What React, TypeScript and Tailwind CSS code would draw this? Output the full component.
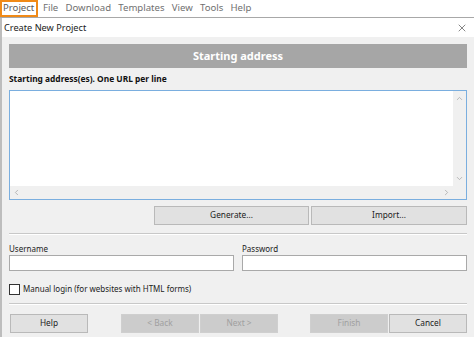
import { X, ChevronUp, ChevronDown, ChevronLeft, ChevronRight } from 'lucide-react';

const font = { fontFamily: '"Noto Sans", "Open Sans", sans-serif' };

function Btn({ label, disabled, className = '' }: { label: string; disabled?: boolean; className?: string }) {
  return (
    <div
      className={`h-[19px] flex items-center justify-center border text-[8.3px] ${
        disabled ? 'border-[#cfcfcf] bg-[#cccccc] text-[#a0a0a0]' : 'border-[#b9b9b9] bg-[#e1e1e1] text-[#222]'
      } ${className}`}
    >
      {label}
    </div>
  );
}

export default function App() {
  const menu = ['Project', 'File', 'Download', 'Templates', 'View', 'Tools', 'Help'];

  return (
    <div className="w-[474px] h-[337px] bg-[#f0f0f0] overflow-hidden flex flex-col" style={font}>
      {/* menu bar */}
      <div className="h-[18px] bg-white flex items-center text-[9.6px] text-[#707070] border-b border-[#a8a8a8] shadow-[0_1px_1px_rgba(0,0,0,0.15)]">
        {menu.map((m, i) => (
          <div
            key={m}
            className={
              i === 0
                ? 'h-[17px] pl-[1px] pr-[2px] mr-[1px] border-2 border-[#f08a17] flex items-center text-[#5a5a5a]'
                : 'px-[3.6px] flex items-center'
            }
          >
            {m}
          </div>
        ))}
      </div>

      <div className="flex-1 flex flex-col border-l-2 border-[#bdbdbd]">
        {/* title */}
        <div className="h-[19px] bg-white flex items-center justify-between pl-[2px] pr-[6px] text-[9.2px] text-[#222]">
          <span>Create New Project</span>
          <X className="w-[12px] h-[12px] text-[#444]" strokeWidth={1.3} />
        </div>

        <div className="flex-1 flex flex-col px-[7px] pt-[7px]">
          <div className="h-[24px] bg-[#a6a6a6] flex items-center justify-center text-white font-bold text-[11px]">
            Starting address
          </div>

          <div className="mt-[5px] text-[8.4px] font-bold text-[#111] leading-[12px]">
            Starting address(es). One URL per line
          </div>

          <div className="mt-[5px] h-[110px] border border-[#7aaedf] bg-white flex flex-col">
            <div className="flex-1 flex">
              <div className="flex-1" />
              <div className="w-[13px] bg-[#f0f0f0] flex flex-col items-center justify-between py-[3px]">
                <ChevronUp className="w-[9px] h-[9px] text-[#a6a6a6]" />
                <ChevronDown className="w-[9px] h-[9px] text-[#a6a6a6]" />
              </div>
            </div>
            <div className="h-[13px] flex">
              <div className="flex-1 bg-[#f0f0f0] flex items-center justify-between px-[2px]">
                <ChevronLeft className="w-[9px] h-[9px] text-[#a6a6a6]" />
                <ChevronRight className="w-[9px] h-[9px] text-[#a6a6a6]" />
              </div>
              <div className="w-[13px] bg-[#f0f0f0]" />
            </div>
          </div>

          <div className="mt-[6px] flex justify-end gap-[2px]">
            <Btn label="Generate..." className="w-[155px]" />
            <Btn label="Import..." className="w-[156px]" />
          </div>

          <div className="mt-[8px] border-t border-[#c8c8c8] border-b border-b-white" />

          <div className="mt-[8px] flex gap-[8px] text-[8px] text-[#222]">
            <div className="flex-1 flex flex-col">
              <span className="leading-[11px]">Username</span>
              <div className="mt-[1px] h-[16px] bg-white border border-[#a9a9a9]" />
            </div>
            <div className="flex-1 flex flex-col">
              <span className="leading-[11px]">Password</span>
              <div className="mt-[1px] h-[16px] bg-white border border-[#a9a9a9]" />
            </div>
          </div>

          <div className="mt-[12px] h-[12px] flex items-center gap-[3px] text-[8px] text-[#222]">
            <div className="w-[11px] h-[11px] bg-white border border-[#333]" />
            <span>Manual login (for websites with HTML forms)</span>
          </div>

          <div className="mt-[8px] border-t border-[#c8c8c8] border-b border-b-white" />

          <div className="mt-[9px] flex items-center">
            <Btn label="Help" className="w-[78px] ml-[1px]" />
            <Btn label="< Back" disabled className="w-[78px] ml-[33px]" />
            <Btn label="Next >" disabled className="w-[78px] ml-[1px]" />
            <Btn label="Finish" disabled className="w-[78px] ml-[32px]" />
            <Btn label="Cancel" className="w-[78px] ml-[1px]" />
          </div>
        </div>
      </div>
    </div>
  );
}
